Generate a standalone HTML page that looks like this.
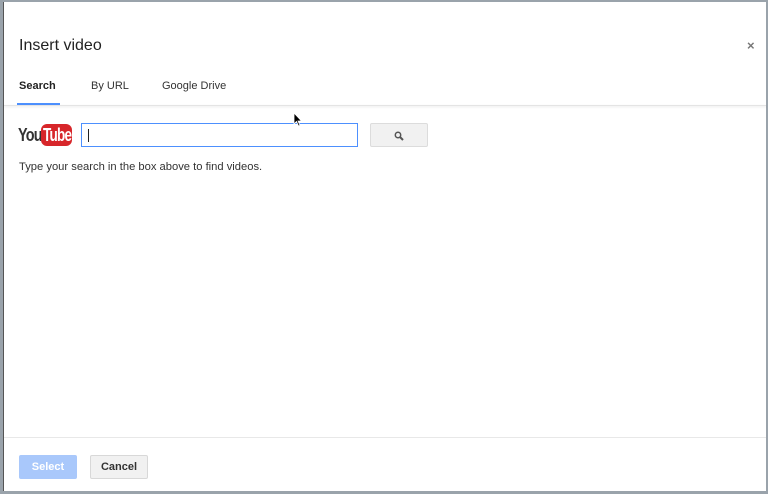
<!DOCTYPE html>
<html><head><style>
*{margin:0;padding:0;box-sizing:border-box}
body{width:768px;height:494px;background:#9aa3ab;font-family:"Liberation Sans",Arial,sans-serif;position:relative;overflow:hidden}
.d{position:absolute;left:3px;top:2px;width:763px;height:489px;background:#fff;border-left:1px solid #555}
.a{position:absolute}
</style></head><body>
<div class="d">
<div class="a" style="left:15px;top:35px;font-size:16px;color:#222">Insert video</div>
<div class="a" style="left:743px;top:36px;font-size:13px;color:#777;font-weight:bold">×</div>
<div class="a" style="left:15px;top:78px;font-size:11px;font-weight:bold;color:#222">Search</div>
<div class="a" style="left:13px;top:101px;width:43px;height:2px;background:#4d90fe"></div>
<div class="a" style="left:87px;top:78px;font-size:11px;color:#333">By URL</div>
<div class="a" style="left:158px;top:78px;font-size:11px;color:#333">Google Drive</div>
<div class="a" style="left:0;top:103px;width:762px;height:1px;background:#e4e4e4;box-shadow:0 1px 2px rgba(0,0,0,.12)"></div>
<div class="a" style="left:14px;top:123px;font-size:18px;font-weight:bold;color:#333;letter-spacing:-1px;transform:scaleX(.8);transform-origin:left">You</div>
<div class="a" style="left:37px;top:122px;width:31px;height:22px;background:#d7262a;border-radius:6px"></div>
<div class="a" style="left:39px;top:122px;color:#fff;font-size:18px;font-weight:bold;line-height:22px;letter-spacing:-1px;transform:scaleX(.75);transform-origin:left">Tube</div>
<div class="a" style="left:77px;top:121px;width:277px;height:24px;border:1px solid #4d90fe"></div>
<div class="a" style="left:84px;top:127px;width:1px;height:13px;background:#222"></div>
<div class="a" style="left:366px;top:121px;width:58px;height:24px;background:#f1f1f1;border:1px solid #dcdcdc;border-radius:2px"></div>
<svg class="a" style="left:390px;top:129px" width="10" height="10" viewBox="0 0 10 10"><circle cx="4" cy="4" r="2.7" stroke="#555" stroke-width="1.5" fill="none"/><path d="M6 6L9 9" stroke="#555" stroke-width="2"/></svg>
<div class="a" style="left:15px;top:159px;font-size:11.2px;color:#333">Type your search in the box above to find videos.</div>
<div class="a" style="left:0;top:435px;width:762px;height:1px;background:#e8e8e8"></div>
<div class="a" style="left:15px;top:453px;width:58px;height:24px;background:#a9c8fb;border-radius:2px;color:#fff;font-size:11px;font-weight:bold;text-align:center;line-height:24px">Select</div>
<div class="a" style="left:86px;top:453px;width:58px;height:24px;background:#f1f1f1;border:1px solid #d8d8d8;border-radius:2px;color:#333;font-size:11px;font-weight:bold;text-align:center;line-height:22px">Cancel</div>
<svg class="a" style="left:289px;top:110px" width="10" height="15" viewBox="0 0 10 15"><path d="M1 1L1 12L3.5 9.5L5.5 14L7 13.3L5 9L8.5 9Z" fill="#000" stroke="#fff" stroke-width=".8"/></svg>
</div>
</body></html>
